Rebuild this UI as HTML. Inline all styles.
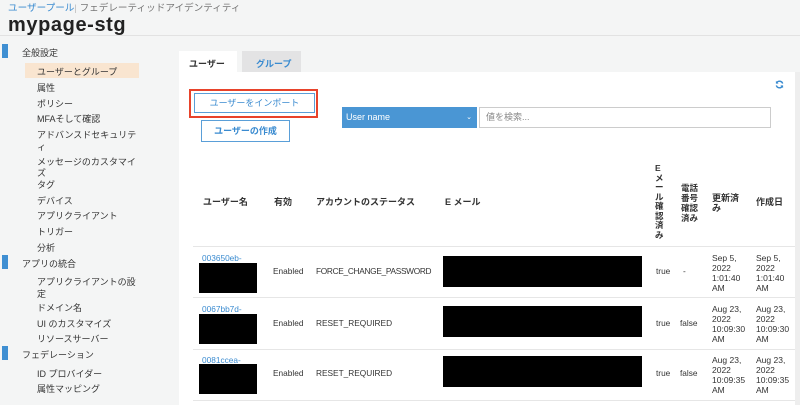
<!DOCTYPE html>
<html><head><meta charset="utf-8"><style>
*{margin:0;padding:0;box-sizing:border-box}
body{width:800px;height:405px;overflow:hidden;background:#f4f5f5;font-family:"Liberation Sans","Noto Sans CJK JP",sans-serif;font-size:9px;color:#333;position:relative}
.a{position:absolute;white-space:nowrap}
.bar{position:absolute;left:2px;width:6px;height:14px;background:#3f8fd2}
.blk{position:absolute;background:#000}
.lnk{color:#3a8bd0}
.ln{position:absolute;height:1px;background:#e6e6e6}
.d{position:absolute;line-height:10px;white-space:nowrap;font-size:8.5px}
.t{font-size:8.3px}
</style></head><body>
<div class="a lnk" style="left:8px;top:0px;font-size:9.6px">ユーザープール<span style="color:#bbb">|</span> <span style="color:#777">フェデレーティッドアイデンティティ</span></div>
<div class="a" style="left:8px;top:14px;font-size:20px;line-height:22px;font-weight:bold;color:#222;letter-spacing:0.6px">mypage-stg</div>
<div class="ln" style="left:0;top:35px;width:800px;background:#e2e2e2"></div>

<div class="bar" style="top:44px"></div>
<div class="a" style="left:22px;top:46px">全般設定</div>
<div class="a" style="left:25px;top:63px;width:114px;height:15px;background:#f9e5d0"></div>
<div class="a" style="left:37px;top:65px">ユーザーとグループ</div>
<div class="a" style="left:37px;top:81px">属性</div>
<div class="a" style="left:37px;top:97px">ポリシー</div>
<div class="a" style="left:37px;top:112px">MFAそして確認</div>
<div class="a" style="left:37px;top:128px">アドバンスドセキュリテ</div>
<div class="a" style="left:37px;top:140px">ィ</div>
<div class="a" style="left:37px;top:155px">メッセージのカスタマイ</div>
<div class="a" style="left:37px;top:166px">ズ</div>
<div class="a" style="left:37px;top:178px">タグ</div>
<div class="a" style="left:37px;top:194px">デバイス</div>
<div class="a" style="left:37px;top:209px">アプリクライアント</div>
<div class="a" style="left:37px;top:225px">トリガー</div>
<div class="a" style="left:37px;top:241px">分析</div>
<div class="bar" style="top:255px"></div>
<div class="a" style="left:22px;top:257px">アプリの統合</div>
<div class="a" style="left:37px;top:275px">アプリクライアントの設</div>
<div class="a" style="left:37px;top:287px">定</div>
<div class="a" style="left:37px;top:301px">ドメイン名</div>
<div class="a" style="left:37px;top:317px">UI のカスタマイズ</div>
<div class="a" style="left:37px;top:332px">リソースサーバー</div>
<div class="bar" style="top:346px"></div>
<div class="a" style="left:22px;top:348px">フェデレーション</div>
<div class="a" style="left:37px;top:367px">ID プロバイダー</div>
<div class="a" style="left:37px;top:382px">属性マッピング</div>

<div class="a" style="left:179px;top:51px;width:58px;height:22px;background:#fff"></div>
<div class="a" style="left:189px;top:57px;font-weight:bold">ユーザー</div>
<div class="a" style="left:242px;top:51px;width:59px;height:21px;background:#e3e3e4"></div>
<div class="a lnk" style="left:256px;top:57px;font-weight:bold">グループ</div>
<div class="a" style="left:179px;top:72px;width:621px;height:333px;background:#fff"></div>
<div class="a" style="left:795px;top:72px;width:5px;height:333px;background:#eee"></div>

<svg class="a" style="left:775px;top:80px" width="9" height="9" viewBox="0 0 10 10"><path d="M8.5 4A3.6 3.6 0 0 0 2 3M1.5 6A3.6 3.6 0 0 0 8 7" stroke="#3a8bd0" stroke-width="1.6" fill="none"/><path d="M1 1v3h3zM9 9V6H6z" fill="#3a8bd0"/></svg>

<div class="a" style="left:189px;top:89px;width:129px;height:29px;border:2px solid #e8432b"></div>
<div class="a lnk" style="left:194px;top:93px;width:121px;height:20px;border:1px solid #5a9fd8;text-align:center;line-height:18px">ユーザーをインポート</div>
<div class="a lnk" style="left:201px;top:120px;width:89px;height:22px;border:1px solid #5a9fd8;text-align:center;line-height:20px;font-weight:bold">ユーザーの作成</div>
<div class="a" style="left:342px;top:107px;width:135px;height:21px;background:#4a96d4;color:#fff;padding-left:4px;line-height:21px">User name<span style="position:absolute;right:5px;font-size:7px">⌄</span></div>
<div class="a" style="left:479px;top:107px;width:292px;height:21px;border:1px solid #ccc;color:#888;padding-left:6px;line-height:19px">値を検索...</div>

<div class="a" style="left:203px;top:195px;font-weight:bold">ユーザー名</div>
<div class="a" style="left:274px;top:195px;font-weight:bold">有効</div>
<div class="a" style="left:316px;top:195px;font-weight:bold">アカウントのステータス</div>
<div class="a" style="left:445px;top:195px;font-weight:bold">E メール</div>
<div class="d" style="left:655px;top:164px;font-weight:bold;font-size:8.5px;width:9px;white-space:normal;line-height:9.5px">E メ ー ル 確 認 済 み</div>
<div class="d" style="left:681px;top:183px;font-weight:bold;font-size:8.5px">電話<br>番号<br>確認<br>済み</div>
<div class="d" style="left:712px;top:193px;font-weight:bold;font-size:9px">更新済<br>み</div>
<div class="a" style="left:756px;top:195px;font-weight:bold">作成日</div>
<div class="ln" style="left:193px;top:246px;width:602px"></div>
<div class="ln" style="left:193px;top:297px;width:602px"></div>
<div class="ln" style="left:193px;top:349px;width:602px"></div>
<div class="ln" style="left:193px;top:400px;width:602px"></div>

<div class="a lnk t" style="left:202px;top:253px">003650eb-</div>
<div class="blk" style="left:199px;top:263px;width:58px;height:30px"></div>
<div class="a t" style="left:273px;top:266px">Enabled</div>
<div class="a t" style="left:316px;top:266px;letter-spacing:-0.3px">FORCE_CHANGE_PASSWORD</div>
<div class="blk" style="left:443px;top:256px;width:199px;height:31px"></div>
<div class="a t" style="left:656px;top:266px">true</div>
<div class="a t" style="left:683px;top:266px">-</div>
<div class="d" style="left:712px;top:253px">Sep 5,<br>2022<br>1:01:40<br>AM</div>
<div class="d" style="left:756px;top:253px">Sep 5,<br>2022<br>1:01:40<br>AM</div>

<div class="a lnk t" style="left:202px;top:304px">0067bb7d-</div>
<div class="blk" style="left:199px;top:314px;width:58px;height:30px"></div>
<div class="a t" style="left:273px;top:318px">Enabled</div>
<div class="a t" style="left:316px;top:318px">RESET_REQUIRED</div>
<div class="blk" style="left:443px;top:306px;width:199px;height:31px"></div>
<div class="a t" style="left:656px;top:318px">true</div>
<div class="a t" style="left:680px;top:318px">false</div>
<div class="d" style="left:712px;top:304px">Aug 23,<br>2022<br>10:09:30<br>AM</div>
<div class="d" style="left:756px;top:304px">Aug 23,<br>2022<br>10:09:30<br>AM</div>

<div class="a lnk t" style="left:202px;top:355px">0081ccea-</div>
<div class="blk" style="left:199px;top:364px;width:58px;height:30px"></div>
<div class="a t" style="left:273px;top:368px">Enabled</div>
<div class="a t" style="left:316px;top:368px">RESET_REQUIRED</div>
<div class="blk" style="left:443px;top:356px;width:199px;height:31px"></div>
<div class="a t" style="left:656px;top:368px">true</div>
<div class="a t" style="left:680px;top:368px">false</div>
<div class="d" style="left:712px;top:355px">Aug 23,<br>2022<br>10:09:35<br>AM</div>
<div class="d" style="left:756px;top:355px">Aug 23,<br>2022<br>10:09:35<br>AM</div>
</body></html>
